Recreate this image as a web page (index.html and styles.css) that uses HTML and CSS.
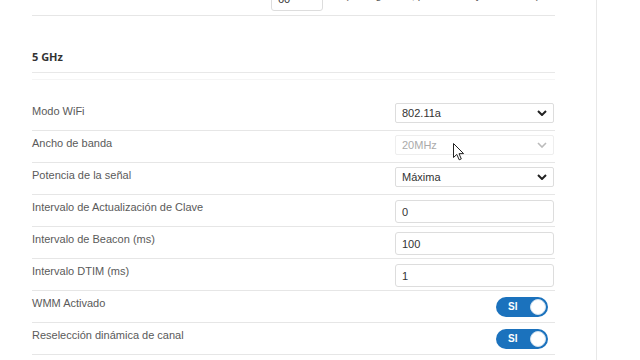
FILE: index.html
```html
<!DOCTYPE html>
<html lang="es">
<head>
<meta charset="utf-8">
<title>5 GHz</title>
<link rel="stylesheet" href="styles.css">
</head>
<body>
<div class="panel">
  <div class="row row-top">
    <div class="top-input">60</div>
    <div class="top-note">(en segundos, por defecto y mínimo 60)</div>
  </div>
  <div class="section-head">5 GHz</div>
  <div class="faint"></div>
  <div class="list">
    <div class="row">
      <div class="label">Modo WiFi</div>
      <div class="select"><span>802.11a</span><svg class="chev" viewBox="0 0 10 6" width="10" height="6"><path d="M1 1l4 4 4-4" fill="none" stroke="#222" stroke-width="2"/></svg></div>
    </div>
    <div class="row">
      <div class="label">Ancho de banda</div>
      <div class="select disabled"><span>20MHz</span><svg class="chev" viewBox="0 0 10 6" width="10" height="6"><path d="M1 1l4 4 4-4" fill="none" stroke="#bbb" stroke-width="1.6"/></svg></div>
    </div>
    <div class="row">
      <div class="label">Potencia de la señal</div>
      <div class="select"><span>Máxima</span><svg class="chev" viewBox="0 0 10 6" width="10" height="6"><path d="M1 1l4 4 4-4" fill="none" stroke="#222" stroke-width="2"/></svg></div>
    </div>
    <div class="row">
      <div class="label">Intervalo de Actualización de Clave</div>
      <div class="input">0</div>
    </div>
    <div class="row">
      <div class="label">Intervalo de Beacon (ms)</div>
      <div class="input">100</div>
    </div>
    <div class="row">
      <div class="label">Intervalo DTIM (ms)</div>
      <div class="input">1</div>
    </div>
    <div class="row">
      <div class="label">WMM Activado</div>
      <div class="toggle"><span class="toggle-text">SI</span><span class="knob"></span></div>
    </div>
    <div class="row">
      <div class="label">Reselección dinámica de canal</div>
      <div class="toggle"><span class="toggle-text">SI</span><span class="knob"></span></div>
    </div>
  </div>
</div>
<svg class="cursor" width="12" height="18" viewBox="0 0 12 18"><path d="M0.5 0.5 L0.5 14.5 L3.8 11.4 L6.2 16.8 L8.3 15.9 L6 10.7 L10.6 10.6 Z" fill="#fff" stroke="#222" stroke-width="1" stroke-linejoin="round"/></svg>
</body>
</html>
```

FILE: styles.css
```css
html, body {
  margin: 0;
  padding: 0;
  background: #fff;
  overflow: hidden;
}
body {
  width: 640px;
  height: 360px;
  position: relative;
  font-family: "Liberation Sans", Arial, sans-serif;
  font-size: 11px;
  color: #555;
}
.panel {
  width: 523px;
  height: 400px;
  padding: 0 41px 0 32px;
  border-right: 1px solid #e8e8e8;
}
.row {
  display: grid;
  grid-template-columns: 1fr 160px;
  height: 31px;
  border-bottom: 1px solid #e6e6e6;
  align-items: start;
}
.row-top {
  display: flex;
  margin-top: -16px;
}
.top-input {
  margin-left: 239px;
  margin-top: 6px;
  width: 52px;
  height: 21px;
  box-sizing: border-box;
  border: 1px solid #ddd;
  border-radius: 3px;
  padding: 2px 0 0 6px;
  color: #333;
  line-height: 13px;
  font-size: 11px;
}
.top-note {
  margin-left: 22px;
  margin-top: 5px;
  color: #555;
  font-size: 11px;
  line-height: 13px;
  white-space: nowrap;
}
.section-head {
  font-family: "Open Sans", "Liberation Sans", sans-serif;
  font-weight: 700;
  font-size: 11px;
  line-height: 16px;
  color: #333;
  padding: 33px 0 7px;
  border-bottom: 1px solid #e8e8e8;
}
.faint {
  margin-top: 6px;
  height: 1px;
  background: #f5f5f5;
}
.list {
  padding-top: 19px;
}
.label {
  padding-top: 6px;
  line-height: 13px;
  color: #5a5a5a;
  white-space: nowrap;
}
.select {
  margin-top: 4px;
  height: 20px;
  box-sizing: border-box;
  border: 1px solid #ddd;
  border-radius: 2px;
  display: flex;
  align-items: center;
  justify-content: space-between;
  padding: 0 6px 0 6px;
  color: #333;
  width: 159px;
}
.select.disabled {
  color: #aaa;
  border-color: #eee;
}
.chev {
  display: block;
}
.input {
  margin-top: 5px;
  height: 23px;
  box-sizing: border-box;
  border: 1px solid #ddd;
  border-radius: 3px;
  padding: 0 6px;
  display: flex;
  align-items: center;
  color: #333;
  width: 159px;
}
.toggle {
  margin-top: 6px;
  justify-self: end;
  margin-right: 7px;
  width: 52px;
  height: 20px;
  border-radius: 10px;
  background: #1b72bd;
  display: flex;
  align-items: center;
  justify-content: space-between;
  padding: 0 2px 0 12px;
  box-sizing: border-box;
}
.toggle-text {
  color: #fff;
  font-weight: 700;
  font-size: 10px;
  line-height: 12px;
}
.knob {
  width: 16px;
  height: 16px;
  border-radius: 50%;
  background: #fff;
  box-sizing: border-box;
  border: 1px solid #cfe0ef;
}
.cursor {
  position: absolute;
  left: 453px;
  top: 143px;
}
```
